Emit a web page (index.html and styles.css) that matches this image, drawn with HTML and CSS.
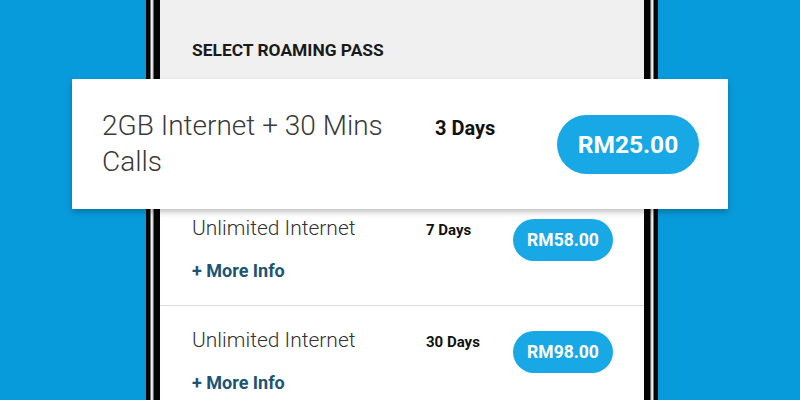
FILE: index.html
```html
<!DOCTYPE html>
<html>
<head>
<meta charset="utf-8">
<link rel="stylesheet" href="styles.css">
</head>
<body>
<div class="stage">
  <div class="screen">
    <div class="header">SELECT ROAMING PASS</div>
    <div class="row row-covered"></div>
    <div class="row">
      <div class="info">
        <div class="name">Unlimited Internet</div>
        <div class="more">+ More Info</div>
      </div>
      <div class="days">7 Days</div>
      <div class="price">RM58.00</div>
    </div>
    <div class="row">
      <div class="info">
        <div class="name">Unlimited Internet</div>
        <div class="more">+ More Info</div>
      </div>
      <div class="days">30 Days</div>
      <div class="price">RM98.00</div>
    </div>
  </div>
  <div class="card">
    <div class="card-name">2GB Internet + 30 Mins Calls</div>
    <div class="card-days">3 Days</div>
    <div class="card-price">RM25.00</div>
  </div>
</div>
</body>
</html>
```

FILE: styles.css
```css
* { box-sizing: border-box; }
html, body {
  margin: 0;
  padding: 0;
}
body {
  width: 800px;
  height: 400px;
  overflow: hidden;
  background: #089bdb;
  font-family: Roboto, "Liberation Sans", sans-serif;
}
.stage {
  position: relative;
  width: 800px;
  height: 400px;
  padding-left: 160px;
}
.screen {
  width: 484px;
  height: 400px;
  background: #fff;
  box-shadow:
    0 0 0 6px #050505,
    0 0 0 7px #6e6e6e,
    0 0 0 8px #d8d8d8,
    0 0 0 9px #f2f2f2,
    0 0 0 10px #7a7a7a,
    0 0 0 14px #050505;
}
.header {
  height: 82px;
  background: #f0f0f0;
  padding: 40px 0 0 32px;
  font-size: 17.4px;
  line-height: 20px;
  font-weight: 700;
  color: #1a1a1a;
}
.row {
  display: flex;
  height: 112px;
  padding: 22px 31px 0 32px;
  border-bottom: 1px solid #dddddd;
}
.info {
  width: 234px;
}
.name {
  font-size: 21px;
  line-height: 24px;
  font-weight: 300;
  color: #333;
  white-space: nowrap;
}
.more {
  margin-top: 20px;
  font-size: 18px;
  line-height: 22px;
  font-weight: 700;
  color: #1c5473;
}
.days {
  flex: 1;
  margin-top: 5px;
  font-size: 15px;
  line-height: 18px;
  font-weight: 700;
  color: #111;
}
.price {
  width: 100px;
  height: 42px;
  margin-top: 3px;
  border-radius: 21px;
  background: #19a8e6;
  color: #fff;
  font-size: 17.5px;
  font-weight: 700;
  display: flex;
  align-items: center;
  justify-content: center;
}
.card {
  position: absolute;
  left: 72px;
  top: 79px;
  width: 656px;
  height: 130px;
  background: #fff;
  box-shadow: 0 3px 6px rgba(0, 0, 0, 0.25);
  display: flex;
  align-items: center;
  padding: 0 29px 0 30px;
}
.card-name {
  width: 333px;
  font-size: 28px;
  line-height: 36px;
  font-weight: 300;
  color: #3a3a3a;
}
.card-days {
  flex: 1;
  margin-bottom: 32px;
  font-size: 20px;
  line-height: 24px;
  font-weight: 700;
  color: #111;
}
.card-price {
  width: 142px;
  height: 59px;
  border-radius: 30px;
  background: #19a8e6;
  color: #fff;
  font-size: 24.5px;
  font-weight: 700;
  display: flex;
  align-items: center;
  justify-content: center;
}
```
